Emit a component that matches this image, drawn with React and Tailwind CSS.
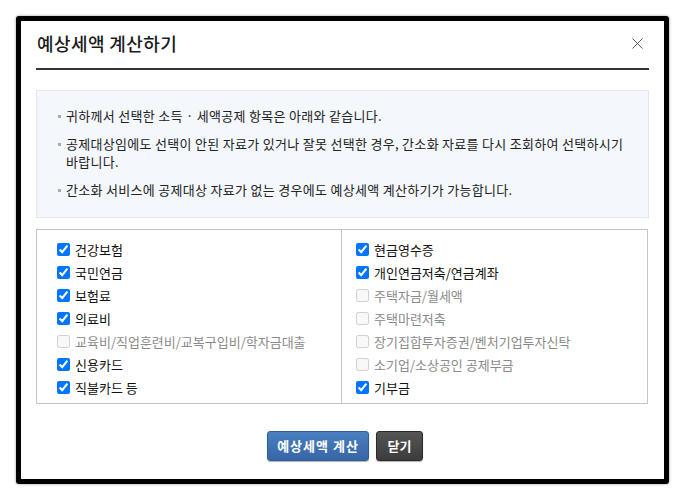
import { X } from 'lucide-react'

const left = [
  ['건강보험', true],
  ['국민연금', true],
  ['보험료', true],
  ['의료비', true],
  ['교육비/직업훈련비/교복구입비/학자금대출', false],
  ['신용카드', true],
  ['직불카드 등', true],
]

const right = [
  ['현금영수증', true],
  ['개인연금저축/연금계좌', true],
  ['주택자금/월세액', false],
  ['주택마련저축', false],
  ['장기집합투자증권/벤처기업투자신탁', false],
  ['소기업/소상공인 공제부금', false],
  ['기부금', true],
]

function Item({ label, on }) {
  return (
    <label className="flex h-[23px] items-center gap-[5px]">
      <input type="checkbox" checked={on} disabled={!on} readOnly className="m-0 h-[13px] w-[13px]" />
      <span className={on ? 'text-[#111]' : 'text-[#8a8a8a]'}>{label}</span>
    </label>
  )
}

export default function App() {
  const font = { fontFamily: '"Noto Sans CJK KR", "Noto Sans", sans-serif' }
  return (
    <div className="h-[501px] w-[685px] bg-white p-4" style={font}>
      <div className="flex h-[468px] flex-col rounded-[3px] border-[5px] border-black bg-white px-[15px] shadow-[0_0_3px_rgba(0,0,0,0.4)]">
        <div className="flex h-[49px] items-center justify-between border-b-2 border-[#333] pb-[2px] pl-[1px]">
          <h1 className="text-[18px] font-medium tracking-[0.4px] text-[#1a1a1a]">예상세액 계산하기</h1>
          <X size={19} strokeWidth={1.1} className="mr-[2px] text-[#3a3f55]" />
        </div>

        <div className="mt-5 h-[128px] border border-[#e2e7ef] bg-[#f4f7fc] pl-[21px] pr-4 pt-[16px] text-[13px] leading-[18px] tracking-[0.3px] text-[#222]">
          <ul className="flex flex-col gap-[10px]">
            <li className="flex gap-[5px]">
              <span className="mt-[8px] h-[3px] w-[3px] shrink-0 bg-[#aaa]" />
              <span>귀하께서 선택한 소득 · 세액공제 항목은 아래와 같습니다.</span>
            </li>
            <li className="flex gap-[5px]">
              <span className="mt-[8px] h-[3px] w-[3px] shrink-0 bg-[#aaa]" />
              <span>공제대상임에도 선택이 안된 자료가 있거나 잘못 선택한 경우, 간소화 자료를 다시 조회하여 선택하시기<br />바랍니다.</span>
            </li>
            <li className="flex gap-[5px]">
              <span className="mt-[8px] h-[3px] w-[3px] shrink-0 bg-[#aaa]" />
              <span>간소화 서비스에 공제대상 자료가 없는 경우에도 예상세액 계산하기가 가능합니다.</span>
            </li>
          </ul>
        </div>

        <div className="mt-[11px] grid h-[175px] w-[612px] grid-cols-2 border border-[#c4c4c4] text-[13px]">
          <div className="border-r border-[#c4c4c4] pl-5 pt-[8px]">
            {left.map(([l, on]) => <Item key={l} label={l} on={on} />)}
          </div>
          <div className="pl-[14px] pt-[8px]">
            {right.map(([l, on]) => <Item key={l} label={l} on={on} />)}
          </div>
        </div>

        <div className="mt-[27px] flex justify-center gap-[7px] pl-[5px]">
          <button className="h-[30px] w-[102px] rounded-[3px] border border-[#2f5d99] bg-gradient-to-b from-[#4a7fc0] to-[#3766a6] text-[13px] font-bold tracking-[1px] text-white shadow-[0_1px_1px_rgba(0,0,0,0.3)]">
            예상세액 계산
          </button>
          <button className="h-[30px] w-[47px] rounded-[3px] border border-[#2a2a2a] bg-gradient-to-b from-[#555] to-[#3c3c3c] text-[13px] font-bold text-white shadow-[0_1px_1px_rgba(0,0,0,0.3)]">
            닫기
          </button>
        </div>
      </div>
    </div>
  )
}
